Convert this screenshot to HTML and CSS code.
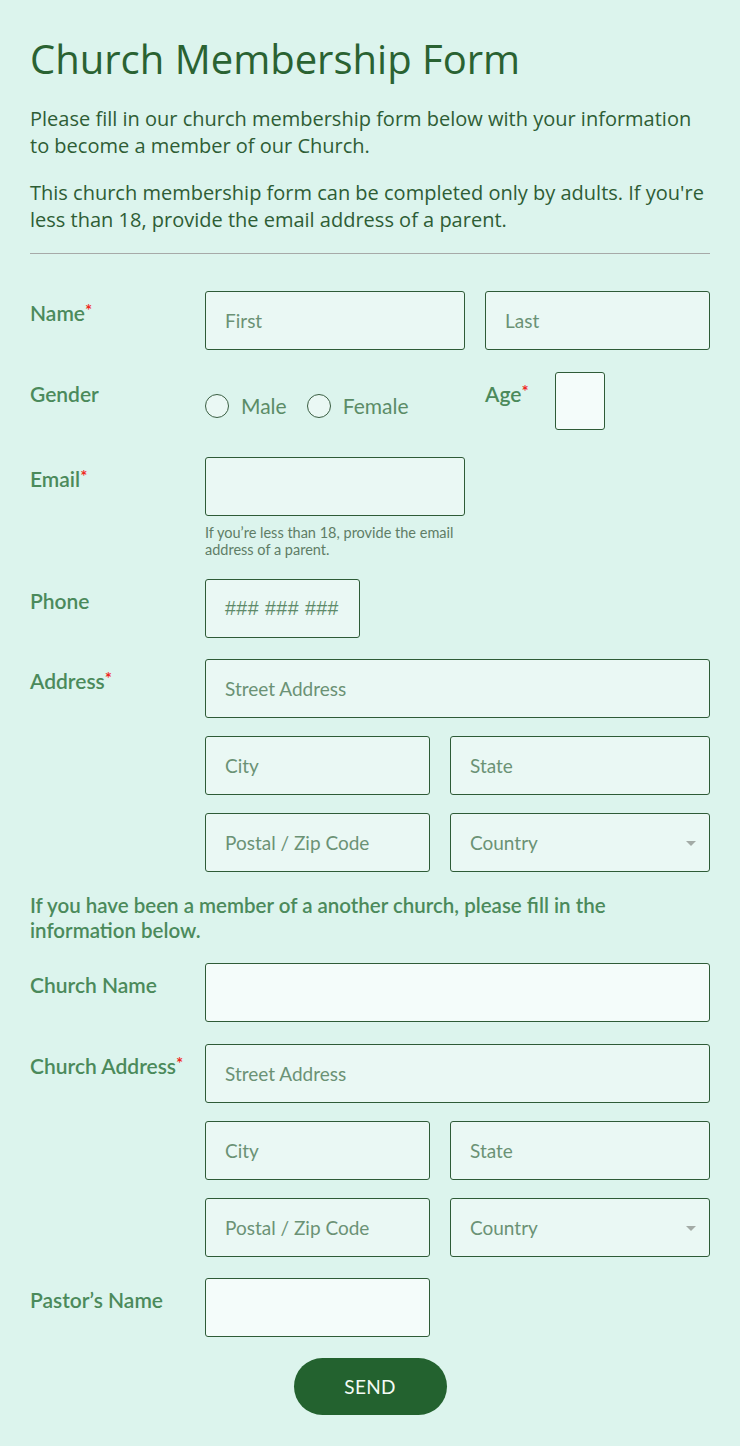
FILE: index.html
```html
<!DOCTYPE html>
<html lang="en">
<head>
<meta charset="utf-8">
<title>Church Membership Form</title>
<link rel="stylesheet" href="styles.css">
</head>
<body>
<form class="form">
  <header class="head">
    <h1 class="title">Church Membership Form</h1>
    <p class="desc">Please fill in our church membership form below with your information to become a member of our Church.</p>
    <p class="desc">This church membership form can be completed only by adults. If you're less than 18, provide the email address of a parent.</p>
  </header>

  <div class="row">
    <label class="label">Name<span class="req">*</span></label>
    <div class="fields">
      <div class="line">
        <div class="input w260">First</div>
        <div class="input grow">Last</div>
      </div>
    </div>
  </div>

  <div class="row row-gender">
    <label class="label">Gender</label>
    <div class="fields gender">
      <div class="radios">
        <span class="radio"></span><span class="rlabel">Male</span>
        <span class="radio"></span><span class="rlabel">Female</span>
      </div>
      <label class="label age-label">Age<span class="req">*</span></label>
      <div class="input age light"></div>
    </div>
  </div>

  <div class="row row-email">
    <label class="label">Email<span class="req">*</span></label>
    <div class="fields">
      <div class="input w260"></div>
      <p class="help">If you’re less than 18, provide the email address of a parent.</p>
    </div>
  </div>

  <div class="row row-phone">
    <label class="label">Phone</label>
    <div class="fields">
      <div class="input phone">### ### ###</div>
    </div>
  </div>

  <div class="row row-address">
    <label class="label">Address<span class="req">*</span></label>
    <div class="fields stack">
      <div class="input">Street Address</div>
      <div class="line">
        <div class="input w225">City</div>
        <div class="input grow">State</div>
      </div>
      <div class="line">
        <div class="input w225">Postal / Zip Code</div>
        <div class="input grow select">Country<span class="caret"></span></div>
      </div>
    </div>
  </div>

  <p class="note">If you have been a member of a another church, please fill in the information below.</p>

  <div class="row">
    <label class="label">Church Name</label>
    <div class="fields">
      <div class="input light"></div>
    </div>
  </div>

  <div class="row row-caddress">
    <label class="label">Church Address<span class="req">*</span></label>
    <div class="fields stack">
      <div class="input">Street Address</div>
      <div class="line">
        <div class="input w225">City</div>
        <div class="input grow">State</div>
      </div>
      <div class="line">
        <div class="input w225">Postal / Zip Code</div>
        <div class="input grow select">Country<span class="caret"></span></div>
      </div>
    </div>
  </div>

  <div class="row row-pastor">
    <label class="label">Pastor’s Name</label>
    <div class="fields">
      <div class="input w225 light"></div>
    </div>
  </div>

  <div class="actions">
    <button type="button" class="send">SEND</button>
  </div>
</form>
</body>
</html>
```

FILE: styles.css
```css
* { box-sizing: border-box; }
html, body { margin: 0; padding: 0; }
body {
  background: #dcf4ed;
  font-family: "Open Sans", "Noto Sans", sans-serif;
  width: 740px;
  min-height: 1446px;
}
.form {
  padding: 0 30px 30px 30px;
}
.head {
  padding-top: 34px;
  padding-bottom: 20px;
  border-bottom: 1px solid #a7a9a8;
  margin-bottom: 37px;
}
.title {
  margin: 0 0 21px 0;
  font-weight: 400;
  font-size: 40px;
  line-height: 50px;
  color: #2a6232;
}
.desc {
  margin: 0 0 20px 0;
  font-size: 20px;
  line-height: 27px;
  color: #2e5d35;
}
.desc:last-child { margin-bottom: 0; }

.row {
  display: flex;
  margin-bottom: 22px;
}
.label {
  width: 175px;
  flex: none;
  padding-top: 11px;
  font-family: "Lato", "Noto Sans", sans-serif;
  font-weight: 600;
  font-size: 21px;
  line-height: 22px;
  color: #4b8a5b;
}
.req { color: #f0281e; font-size: 17px; vertical-align: top; line-height: 18px; }
.fields { flex: 1; min-width: 0; }
.stack { display: flex; flex-direction: column; gap: 18px; }
.line { display: flex; gap: 20px; }
.input {
  height: 59px;
  border: 1px solid #2e5b37;
  border-radius: 3px;
  background: #eaf8f4;
  padding: 0 19px;
  display: flex;
  align-items: center;
  font-family: "Lato", "Noto Sans", sans-serif;
  font-size: 19px;
  color: #6b9275;
  position: relative;
  white-space: nowrap;
  overflow: hidden;
}
.light { background: #f4fcfa; }
.w260 { width: 260px; flex: none; }
.w225 { width: 225px; flex: none; }
.grow { flex: 1; }
.phone {
  width: 155px;
  padding: 0 0 0 19px;
  font-family: "Liberation Sans", sans-serif;
  font-size: 19.5px;
  letter-spacing: 0.5px;
  color: #5e8a69;
}
.select { padding-right: 40px; overflow: visible; }
.caret {
  position: absolute;
  right: 13px;
  top: 27px;
  width: 0;
  height: 0;
  border-left: 5px solid transparent;
  border-right: 5px solid transparent;
  border-top: 5px solid #a3aba6;
}

.row-gender { margin-bottom: 27px; }
.gender { display: flex; align-items: flex-start; }
.radios {
  width: 280px;
  flex: none;
  display: flex;
  align-items: center;
  padding-top: 21px;
}
.radio {
  width: 24px;
  height: 24px;
  border: 1.5px solid #3a5e42;
  border-radius: 50%;
  background: #eaf8f4;
  flex: none;
}
.rlabel {
  font-family: "Lato", "Noto Sans", sans-serif;
  font-size: 21px;
  color: #5b8c67;
  margin-left: 12px;
  margin-right: 20px;
}
.label.age-label { width: 70px; }
.age { width: 50px; height: 58px; padding: 0; }

.row-email { margin-bottom: 21px; }
.help {
  margin: 8px 0 0 0;
  width: 262px;
  font-family: "Lato", "Noto Sans", sans-serif;
  font-size: 14.5px;
  line-height: 17px;
  color: #5f7d66;
}

.row-phone { margin-bottom: 21px; }
.row-address { margin-bottom: 21px; }

.note {
  margin: 0 0 20px 0;
  font-family: "Lato", "Noto Sans", sans-serif;
  font-weight: 600;
  font-size: 20.5px;
  line-height: 25px;
  color: #4b8a5b;
}

.row-caddress { margin-bottom: 21px; }
.row-pastor { margin-bottom: 21px; }
.actions { display: flex; justify-content: center; }
.send {
  width: 153px;
  height: 57px;
  border: none;
  border-radius: 29px;
  background: #23622f;
  color: #f3fbf5;
  font-family: "Lato", "Noto Sans", sans-serif;
  font-size: 19px;
  letter-spacing: 0.3px;
}
```
